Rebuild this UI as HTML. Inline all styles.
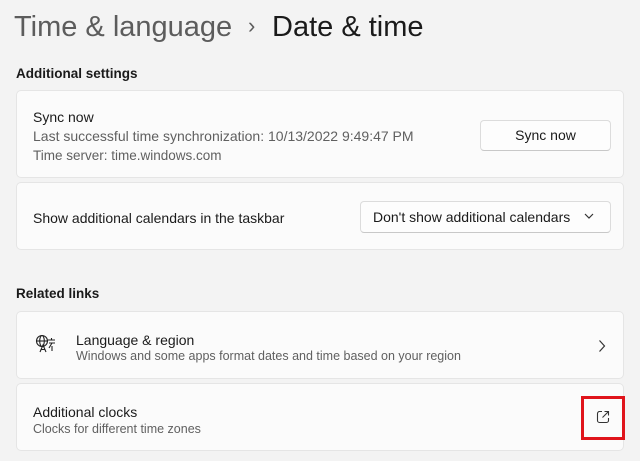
<!DOCTYPE html>
<html><head><style>
body{margin:0;width:640px;height:461px;background:#f3f3f3;font-family:"Liberation Sans",sans-serif;position:relative;overflow:hidden;color:#1a1a1a}
.a{position:absolute;white-space:nowrap}
.card{position:absolute;left:16px;width:608px;background:#fbfbfb;border:1px solid #e5e5e5;border-radius:5px;box-sizing:border-box}
.t{font-size:14px;color:#1b1b1b}
.s{font-size:12.5px;color:#606060}
.btn{position:absolute;background:#fdfdfd;border:1px solid #dcdcdc;border-bottom-color:#c8c8c8;border-radius:4px;box-sizing:border-box;font-size:14px}
</style></head><body>
<div class="a" style="left:14px;top:11px;font-size:29px;color:#5c5c5c">Time &amp; language</div>
<div class="a" style="left:248px;top:13px;font-size:22px;color:#5c5c5c">›</div>
<div class="a" style="left:272px;top:11px;font-size:29px;color:#1a1a1a">Date &amp; time</div>
<div class="a" style="left:16px;top:66px;font-size:13.5px;font-weight:bold;color:#1a1a1a">Additional settings</div>

<div class="card" style="top:90px;height:88px"></div>
<div class="a t" style="left:33px;top:109px">Sync now</div>
<div class="a s" style="left:33px;top:128px;font-size:14px">Last successful time synchronization: 10/13/2022 9:49:47 PM</div>
<div class="a s" style="left:33px;top:148px;font-size:13.5px">Time server: time.windows.com</div>
<div class="btn" style="left:480px;top:120px;width:131px;height:31px;text-align:center;line-height:29px">Sync now</div>

<div class="card" style="top:182px;height:68px"></div>
<div class="a t" style="left:33px;top:210px">Show additional calendars in the taskbar</div>
<div class="btn" style="left:360px;top:201px;width:251px;height:32px;line-height:30px;padding-left:12px">Don't show additional calendars</div>
<svg class="a" style="left:584px;top:212px" width="10" height="8"><path d="M1 2 L5 6 L9 2" fill="none" stroke="#333" stroke-width="1.2"/></svg>

<div class="a" style="left:16px;top:286px;font-size:13.5px;font-weight:bold;color:#1a1a1a">Related links</div>

<div class="card" style="top:311px;height:68px"></div>
<svg class="a" style="left:34px;top:334px" width="24" height="24" fill="none" stroke="#222" stroke-width="1.1">
<circle cx="8" cy="7" r="5.5"/><ellipse cx="8" cy="7" rx="2.3" ry="5.5"/><path d="M2.5 7h11"/>
<path d="M14 6h7M17.5 4v2M15 9h6M18 9l-3 5M18 12v5"/><path d="M6 18l3-7 3 7M7.2 15.5h3.6"/></svg>
<div class="a t" style="left:76px;top:332px">Language &amp; region</div>
<div class="a s" style="left:76px;top:349px">Windows and some apps format dates and time based on your region</div>
<svg class="a" style="left:598px;top:339px" width="8" height="14"><path d="M1.5 1.5 L6.5 7 L1.5 12.5" fill="none" stroke="#333" stroke-width="1.2"/></svg>

<div class="card" style="top:383px;height:68px"></div>
<div class="a t" style="left:33px;top:404px">Additional clocks</div>
<div class="a s" style="left:33px;top:422px">Clocks for different time zones</div>
<div class="a" style="left:581px;top:396px;width:44px;height:44px;border:3px solid #e0141b;box-sizing:border-box"></div>
<svg class="a" style="left:596px;top:410px" width="14" height="14" fill="none" stroke="#333" stroke-width="1.1"><path d="M6 1.5H3.5a2 2 0 0 0-2 2v7a2 2 0 0 0 2 2h7a2 2 0 0 0 2-2V8"/><path d="M8.5 1.5h4v4M12.5 1.5L6.5 7.5"/></svg>
</body></html>
